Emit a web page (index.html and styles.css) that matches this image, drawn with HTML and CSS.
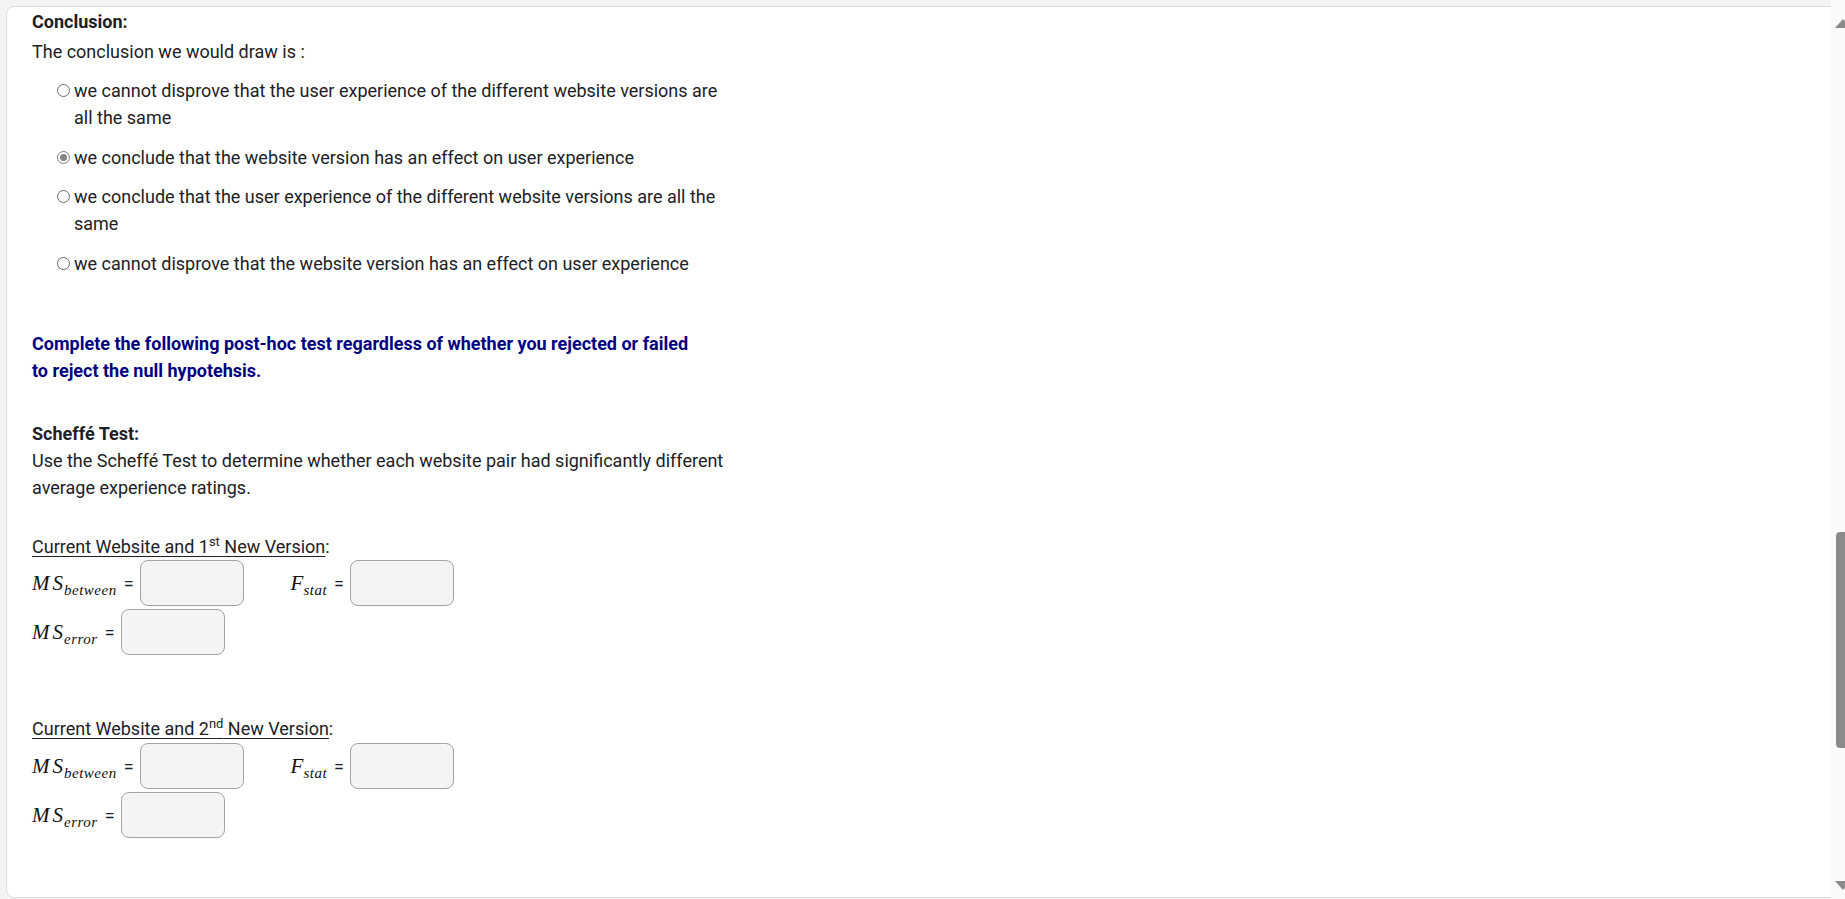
FILE: index.html
```html
<!DOCTYPE html>
<html lang="en">
<head>
<meta charset="utf-8">
<title>Conclusion – Scheffé Test</title>
<link rel="stylesheet" href="styles.css">
</head>
<body>
<div class="card">
  <div class="content">
    <div class="label-bold">Conclusion:</div>
    <p class="intro">The conclusion we would draw is :</p>
    <div class="answers">
      <div class="answer"><span class="radio"></span><span class="answer-text">we cannot disprove that the user experience of the different website versions are all the same</span></div>
      <div class="answer"><span class="radio checked"></span><span class="answer-text">we conclude that the website version has an effect on user experience</span></div>
      <div class="answer"><span class="radio"></span><span class="answer-text">we conclude that the user experience of the different website versions are all the same</span></div>
      <div class="answer"><span class="radio"></span><span class="answer-text">we cannot disprove that the website version has an effect on user experience</span></div>
    </div>

    <p class="notice">Complete the following post-hoc test regardless of whether you rejected or failed to reject the null hypotehsis.</p>

    <div class="label-bold scheffe">Scheffé Test:</div>
    <p class="desc">Use the Scheffé Test to determine whether each website pair had significantly different average experience ratings.</p>

    <section class="pair pair-first">
      <div class="pair-title"><span class="ul">Current Website and 1<sup>st</sup> New Version</span>:</div>
      <div class="eq-row">
        <span class="math"><span class="mi m">M</span><span class="mi s">S</span><span class="msub">between</span></span><span class="eqs">=</span><input class="field" type="text" aria-label="MS between">
        <span class="math math-f"><span class="mi f">F</span><span class="msub">stat</span></span><span class="eqs">=</span><input class="field" type="text" aria-label="F stat">
      </div>
      <div class="eq-row eq-row-2">
        <span class="math"><span class="mi m">M</span><span class="mi s">S</span><span class="msub">error</span></span><span class="eqs">=</span><input class="field" type="text" aria-label="MS error">
      </div>
    </section>

    <section class="pair pair-second">
      <div class="pair-title"><span class="ul">Current Website and 2<sup>nd</sup> New Version</span>:</div>
      <div class="eq-row">
        <span class="math"><span class="mi m">M</span><span class="mi s">S</span><span class="msub">between</span></span><span class="eqs">=</span><input class="field" type="text" aria-label="MS between">
        <span class="math math-f"><span class="mi f">F</span><span class="msub">stat</span></span><span class="eqs">=</span><input class="field" type="text" aria-label="F stat">
      </div>
      <div class="eq-row eq-row-2">
        <span class="math"><span class="mi m">M</span><span class="mi s">S</span><span class="msub">error</span></span><span class="eqs">=</span><input class="field" type="text" aria-label="MS error">
      </div>
    </section>
  </div>
</div>

<div class="scrollbar" aria-hidden="true">
  <svg class="arrow arrow-up" width="14" height="14" viewBox="0 0 14 14"><polygon points="4,12 12,3 20,12" fill="#8a8a8a"/></svg>
  <div class="thumb"></div>
  <svg class="arrow arrow-down" width="14" height="14" viewBox="0 0 14 14"><polygon points="4,2 20,2 12,11" fill="#8a8a8a"/></svg>
</div>
</body>
</html>
```

FILE: styles.css
```css
html, body {
  margin: 0;
  height: 100%;
  overflow: hidden;
}

body {
  background: #f4f4f4;
  font-family: Roboto, "Liberation Sans", sans-serif;
  font-size: 18px;
  line-height: 27px;
  color: #1d2125;
}

.card {
  margin: 6px 0 0 6px;
  background: #ffffff;
  border: 1px solid #dcdcdc;
  border-radius: 8px;
  padding: 1px 25px 59px 25px;
}

.content {
  width: 694px;
}

p {
  margin: 0;
}

.label-bold {
  font-weight: 700;
}

.intro {
  margin-top: 3px;
}

.answers {
  margin-top: 12px;
  padding-left: 25px;
}

.answer {
  display: flex;
  align-items: flex-start;
  gap: 4px;
}

.answer + .answer {
  margin-top: 12.5px;
}

.radio {
  flex: 0 0 auto;
  width: 13px;
  height: 13px;
  box-sizing: border-box;
  border: 1px solid #6b6b6b;
  border-radius: 50%;
  background: #fff;
  margin-top: 7px;
  display: flex;
  align-items: center;
  justify-content: center;
}

.radio.checked {
  border-color: #7d7d7d;
}

.radio.checked::after {
  content: "";
  width: 7px;
  height: 7px;
  border-radius: 50%;
  background: #858585;
}

.answer-text {
  flex: 1 1 auto;
}

.notice {
  margin-top: 53.5px;
  width: 665px;
  font-weight: 700;
  color: #00007f;
}

.scheffe {
  margin-top: 35.5px;
}

.pair-first {
  margin-top: 32px;
}

.pair-second {
  margin-top: 59.5px;
}

.ul {
  text-decoration: underline;
  text-underline-offset: 3px;
  text-decoration-thickness: 1px;
}

sup {
  font-size: 13px;
  line-height: 0;
  vertical-align: 7px;
}

.eq-row {
  display: flex;
  align-items: center;
  height: 46px;
  margin-top: 0.5px;
}

.pair-second .eq-row {
  margin-top: 1.5px;
}

.eq-row.eq-row-2,
.pair-second .eq-row.eq-row-2 {
  margin-top: 3px;
}

.math {
  font-family: "Liberation Serif", "Times New Roman", serif;
  font-style: italic;
  color: #111;
  white-space: nowrap;
  line-height: 1;
}

.mi {
  font-size: 21px;
}

.mi.m {
  margin-right: 3px;
}

.mi.s {
  margin-right: 1px;
}

.mi.f {
  margin-right: 0;
}

.msub {
  display: inline-block;
  font-size: 15px;
  letter-spacing: 0.5px;
  position: relative;
  top: 5px;
}

.math-f {
  margin-left: 47px;
}

.eqs {
  margin: 0 6px 0 7px;
  color: #1d2125;
}

.field {
  width: 104px;
  height: 46px;
  box-sizing: border-box;
  border: 1px solid #a3a3a3;
  border-radius: 8px;
  background: #f3f4f6;
  margin: 0;
  padding: 0 8px;
  font: inherit;
  outline: none;
}

.scrollbar {
  position: fixed;
  top: 0;
  right: 0;
  width: 14px;
  height: 100%;
  background: #fafafa;
  overflow: hidden;
}

.arrow {
  position: absolute;
  left: 0;
}

.arrow-up {
  top: 16px;
}

.arrow-down {
  top: 879px;
}

.thumb {
  position: absolute;
  top: 532px;
  left: 5px;
  width: 14px;
  height: 216px;
  background: #8b8b8b;
  border-radius: 4px;
}
```
